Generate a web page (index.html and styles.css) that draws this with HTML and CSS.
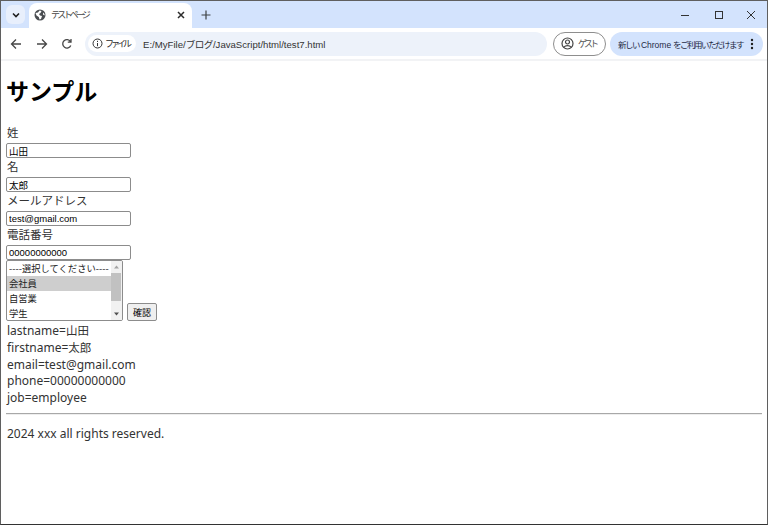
FILE: index.html
```html
<!DOCTYPE html>
<html lang="ja">
<head>
<meta charset="utf-8">
<title>テストページ</title>
<link rel="stylesheet" href="styles.css">
</head>
<body>
<div class="window">
  <div class="tabstrip">
    <div class="tabmenu"><svg width="10" height="10" viewBox="0 0 10 10"><path d="M2 3.5 5 6.5 8 3.5" fill="none" stroke="#1f1f1f" stroke-width="1.6"/></svg></div>
    <div class="tab">
      <svg class="favicon" width="12" height="12" viewBox="0 0 12 12"><circle cx="6" cy="6" r="5.5" fill="#4a4d51"/><path d="M1.5 4 4 3.5 5.5 1.5 7.5 2 6.5 4 5 5 6 6.5 8 7 7 10 5.5 10.5 4.8 8 2.5 6.5ZM9 3.5 10.5 5 10.5 6.5 9 5.5Z" fill="#fff"/></svg>
      <span class="tabtitle">テストページ</span>
      <svg class="tabclose" width="8" height="8" viewBox="0 0 8 8"><path d="M1 1 7 7M7 1 1 7" stroke="#2b2b2b" stroke-width="1.5"/></svg>
    </div>
    <svg class="newtab" width="10" height="10" viewBox="0 0 10 10"><path d="M5 .5V9.500M.5 5H9.500" stroke="#3c4043" stroke-width="1.2"/></svg>
    <div class="winctrls">
      <svg width="10" height="10" viewBox="0 0 10 10"><path d="M1 5.500H9" stroke="#333" stroke-width="1"/></svg>
      <svg width="10" height="10" viewBox="0 0 10 10"><rect x="1.500" y="1.500" width="7" height="7" fill="none" stroke="#333" stroke-width="1"/></svg>
      <svg width="10" height="10" viewBox="0 0 10 10"><path d="M1 1 9 9M9 1 1 9" stroke="#333" stroke-width="1"/></svg>
    </div>
  </div>
  <div class="toolbar">
    <div class="navbtns">
      <svg width="12" height="12" viewBox="0 0 12 12"><path d="M11 6H1.500M6 1.500 1.500 6 6 10.500" fill="none" stroke="#474747" stroke-width="1.300"/></svg>
      <svg width="12" height="12" viewBox="0 0 12 12"><path d="M1 6H10.500M6 1.500 10.500 6 6 10.500" fill="none" stroke="#474747" stroke-width="1.300"/></svg>
      <svg width="12" height="12" viewBox="0 0 12 12"><path d="M9.800 7.500A4.200 4.200 0 1 1 9.500 3.600M10 1V4.200H6.800" fill="none" stroke="#474747" stroke-width="1.300"/></svg>
    </div>
    <div class="omnibox">
      <div class="chip">
        <svg width="11" height="11" viewBox="0 0 11 11"><circle cx="5.500" cy="5.500" r="4.500" fill="none" stroke="#333" stroke-width="1"/><path d="M5.500 5V8.200M5.500 2.800V4" stroke="#333" stroke-width="1"/></svg>
        <span>ファイル</span>
      </div>
      <span class="url">E:/MyFile/<span class="narrow">ブログ</span>/JavaScript/html/test7.html</span>
    </div>
    <div class="guest">
      <svg width="13" height="13" viewBox="0 0 13 13"><circle cx="6.500" cy="6.500" r="5.500" fill="none" stroke="#444" stroke-width="1.200"/><circle cx="6.500" cy="5" r="2" fill="none" stroke="#444" stroke-width="1.200"/><path d="M3 10.200C4.500 8.200 8.500 8.200 10 10.200" fill="none" stroke="#444" stroke-width="1.200"/></svg>
      <span>ゲスト</span>
    </div>
    <div class="update">
      <span class="updatetext">新しい <span class="latin">Chrome</span> をご利用いただけます</span>
      <svg width="4" height="12" viewBox="0 0 4 12"><circle cx="2" cy="2" r="1.200" fill="#1f1f1f"/><circle cx="2" cy="6" r="1.200" fill="#1f1f1f"/><circle cx="2" cy="10" r="1.200" fill="#1f1f1f"/></svg>
    </div>
  </div>
  <main class="page">
    <h1 class="title">サンプル</h1>
    <form class="form">
      <div class="field"><label>姓</label><input class="text" value="山田"></div>
      <div class="field"><label>名</label><input class="text" value="太郎"></div>
      <div class="field"><label>メールアドレス</label><input class="text" value="test@gmail.com"></div>
      <div class="field"><label>電話番号</label><input class="text" value="00000000000"></div>
      <div class="actions">
        <div class="list" role="listbox">
          <div class="options">
            <div class="option">----選択してください----</div>
            <div class="option selected">会社員</div>
            <div class="option">自営業</div>
            <div class="option">学生</div>
          </div>
          <div class="scrollbar">
            <svg class="arrow" width="11" height="12" viewBox="0 0 11 12"><path d="M3 7.500H8L5.500 4.500Z" fill="#a3a3a3"/></svg>
            <div class="track"><div class="thumb"></div></div>
            <svg class="arrow" width="11" height="12" viewBox="0 0 11 12"><path d="M3 4.500H8L5.500 7.500Z" fill="#505050"/></svg>
          </div>
        </div>
        <button type="button" class="confirm">確認</button>
      </div>
    </form>
    <div class="results">
      <div class="line">lastname=<span class="ja">山田</span></div>
      <div class="line">firstname=<span class="ja">太郎</span></div>
      <div class="line">email=test@gmail.com</div>
      <div class="line">phone=00000000000</div>
      <div class="line">job=employee</div>
    </div>
    <hr class="rule">
    <p class="footer">2024 xxx all rights reserved.</p>
  </main>
</div>
</body>
</html>
```
FILE: styles.css
```css
* { box-sizing: border-box; }
html, body { margin: 0; height: 100%; }
body { font-family: "Noto Sans", "Noto Sans CJK JP", sans-serif; color: #1f1f1f; background: #fff; overflow: hidden; }
.window { width: 768px; height: 525px; border: 1px solid #5f5f5f; border-bottom-color: #333; display: flex; flex-direction: column; }
.tabstrip { height: 27px; background: #d3e3fd; display: flex; align-items: center; flex: none; }
.tabmenu { width: 19px; height: 19px; margin-left: 5px; background: #e8effc; border-radius: 6px; display: flex; align-items: center; justify-content: center; }
.tab { width: 163px; height: 27px; margin-left: 4px; margin-top: 3px; background: #fff; border-radius: 8px 8px 0 0; display: flex; align-items: center; padding: 0 7px 3px 5px; }
.favicon { flex: none; }
.tabtitle { font: 9px "Noto Sans CJK JP", sans-serif; color: #444; letter-spacing: -2.800px; margin-left: 5px; flex: 1; }
.newtab { margin-left: 9px; }
.winctrls { margin-left: auto; display: flex; gap: 22px; padding-right: 11px; }
.winctrls svg:first-child { margin-right: 2px; }
.toolbar { height: 33px; background: #fff; border-bottom: 2px solid #f2f3f5; display: flex; align-items: center; flex: none; padding-right: 4px; }
.navbtns { display: flex; gap: 13.500px; padding-left: 9px; width: 84px; flex: none; }
.omnibox { width: 462px; height: 24px; background: #edf2fa; border-radius: 12px; display: flex; align-items: center; padding-left: 3px; flex: none; }
.chip { width: 48px; height: 17px; background: #fff; border-radius: 9px; display: flex; align-items: center; gap: 2px; padding-left: 4px; font: 9px "Noto Sans CJK JP", sans-serif; color: #1f1f1f; letter-spacing: -3px; flex: none; }
.url { font: 9.600px "Liberation Sans", "Noto Sans CJK JP", sans-serif; color: #333; margin-left: 7px; white-space: nowrap; }
.narrow { letter-spacing: -0.500px; }
.guest { width: 53px; height: 24px; margin-left: 6px; border: 1px solid #8e8e8e; border-radius: 12px; display: flex; align-items: center; padding-left: 7px; gap: 4px; font: 9px "Noto Sans CJK JP", sans-serif; color: #555; letter-spacing: -3px; flex: none; }
.update { width: 153px; height: 24px; margin-left: 4px; background: #d3e3fd; border-radius: 12px; display: flex; align-items: center; justify-content: space-between; padding: 0 9px 0 8px; flex: none; }
.updatetext { font: 8.500px "Noto Sans CJK JP", sans-serif; color: #1f2a44; white-space: nowrap; letter-spacing: -1.500px; word-spacing: 1.500px; }
.latin { font-family: "Liberation Sans", sans-serif; letter-spacing: 0; }
.page { flex: 1; padding: 0 5px; font-size: 12px; color: #333; }
.title { margin: 16px 0 20px; font: bold 23px/27px "Noto Sans CJK JP", sans-serif; color: #000; }
.field { height: 34px; }
.field label { display: block; height: 17px; line-height: 17px; padding-left: 1px; font-size: 11.500px; font-family: "Noto Sans CJK JP", sans-serif; }
.text { display: block; width: 125px; height: 15px; margin: 2px 0 0; padding: 0 2px; border: 1px solid #8c8c8c; border-radius: 2px; font: 9.500px "Liberation Sans", "Noto Sans CJK JP", sans-serif; color: #000; }
.actions { display: flex; align-items: flex-end; gap: 4px; height: 61px; }
.list { width: 117px; height: 61px; border: 1px solid #8c8c8c; border-radius: 2px; display: flex; overflow: hidden; font: 9.300px "Noto Sans CJK JP", sans-serif; color: #222; }
.options { flex: 1; min-width: 0; }
.option { height: 15px; line-height: 15px; padding-left: 2px; white-space: nowrap; }
.selected { background: #cecece; }
.scrollbar { width: 11px; background: #f1f1f1; display: flex; flex-direction: column; flex: none; }
.arrow { flex: none; }
.track { flex: 1; min-height: 0; }
.thumb { width: 10px; height: 28px; background: #c1c1c1; }
.confirm { width: 30px; height: 18px; margin: 0; padding: 0; border: 1px solid #8c8c8c; border-radius: 2px; background: #efefef; font: 9px "Noto Sans CJK JP", sans-serif; color: #000; }
.results { margin-top: 2px; padding-left: 1px; }
.line { height: 16.800px; line-height: 16.800px; }
.ja { font-size: 11.500px; font-family: "Noto Sans CJK JP", sans-serif; line-height: 1; }
.rule { margin: 6px 0 0; border: 0; border-top: 1px solid #a8a8a8; height: 2px; border-bottom: 1px solid #eee; }
.footer { margin: 10px 0 0; padding-left: 1px; line-height: 17px; }
```
